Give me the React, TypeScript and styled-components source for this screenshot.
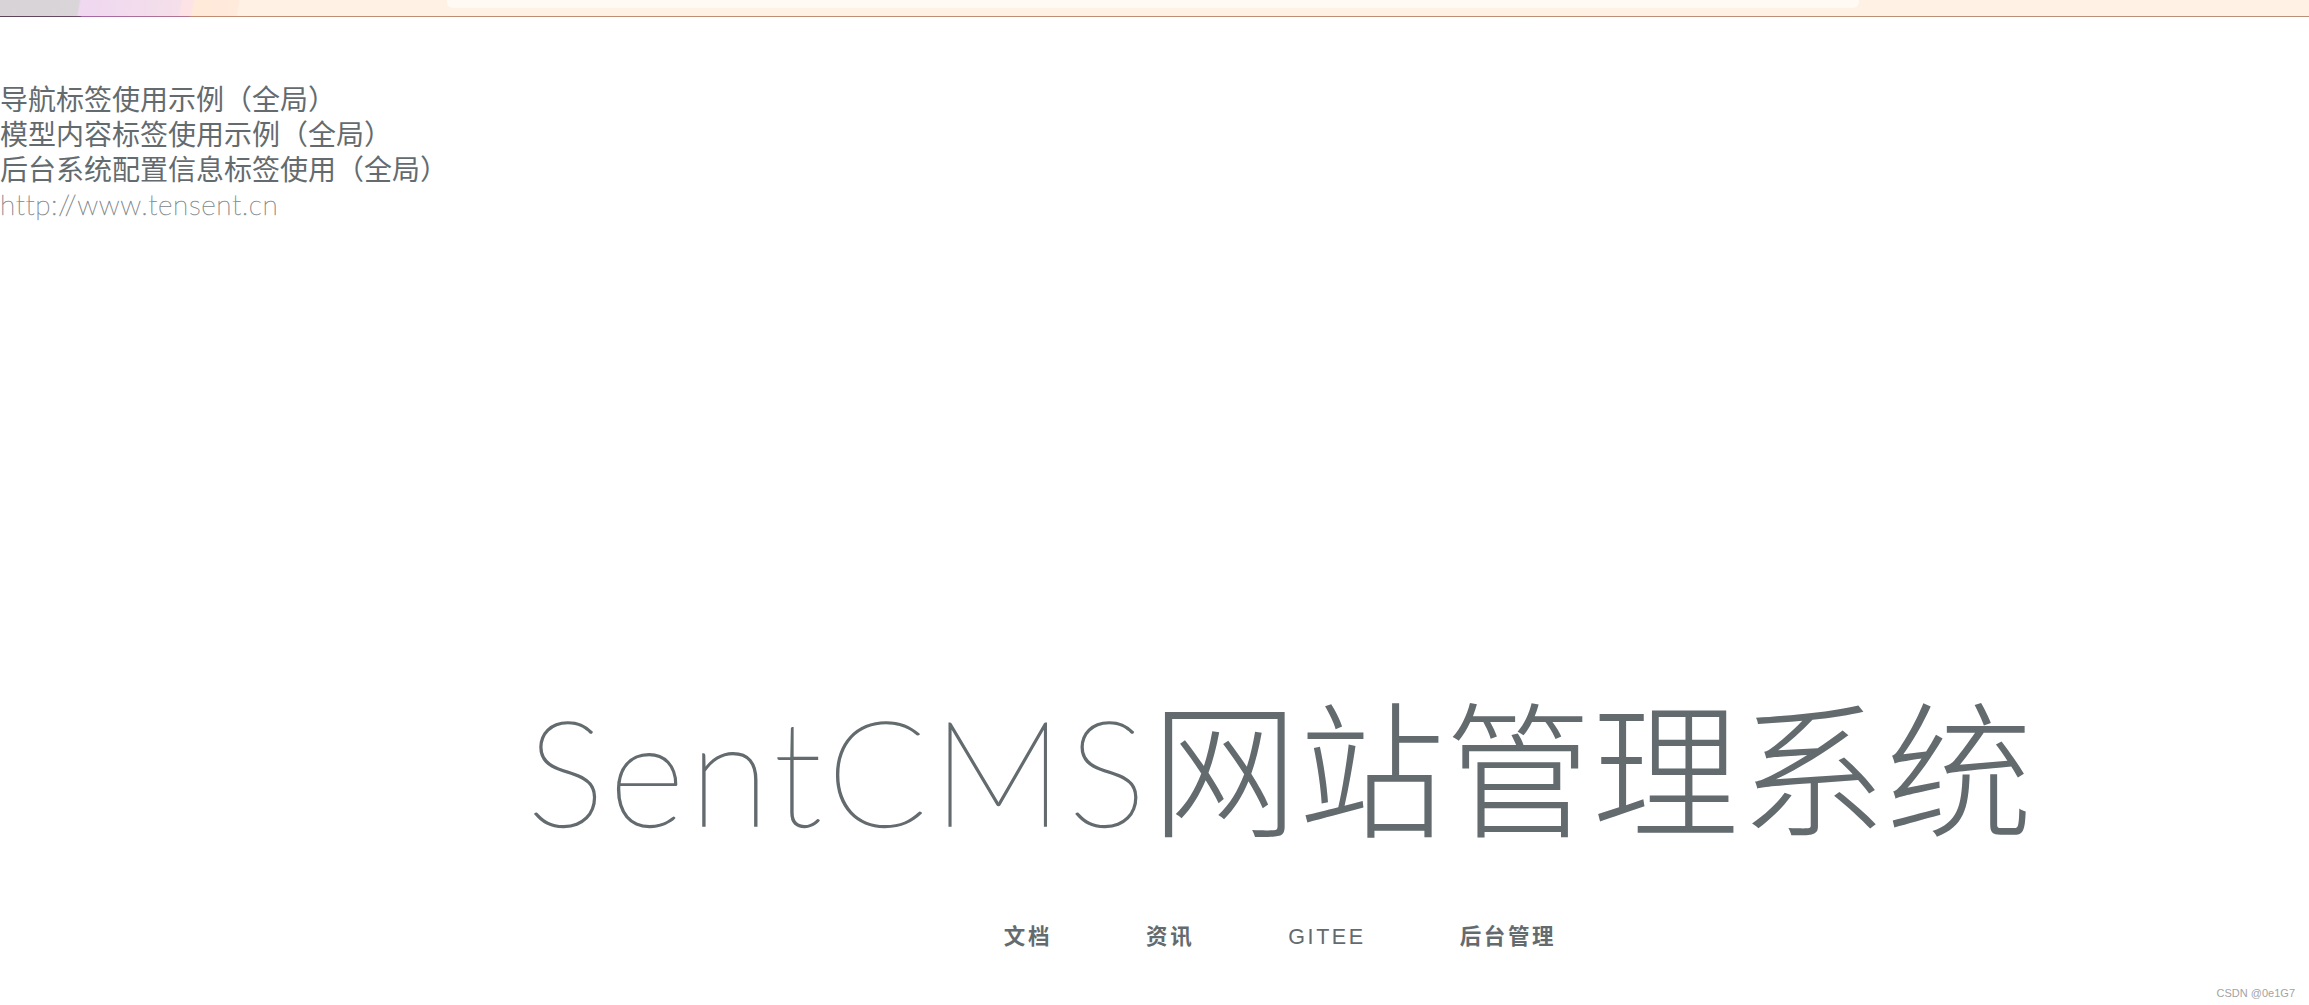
import React from "react";
import styled, { createGlobalStyle } from "styled-components";

const GlobalStyle = createGlobalStyle`
  html, body {
    margin: 0;
    padding: 0;
    background: #ffffff;
    overflow: hidden;
  }
  body {
    font-family: "Lato", "Noto Sans CJK SC", sans-serif;
    color: #636b6f;
  }
  a {
    text-decoration: none;
    color: inherit;
  }
`;

const nav = ["导航标签使用示例（全局）", "模型内容标签使用示例（全局）", "后台系统配置信息标签使用（全局）"];
const links = [
  { label: "文档", latin: false },
  { label: "资讯", latin: false },
  { label: "GITEE", latin: true },
  { label: "后台管理", latin: false },
];

export default function App() {
  return (
    <>
      <GlobalStyle />
      <Page>
        <TopStrip>
          <AddressBar />
        </TopStrip>
        <StripLine />

        <TagList>
          {nav.map((item) => (
            <TagLine key={item}>{item}</TagLine>
          ))}
          <UrlLine>http://www.tensent.cn</UrlLine>
        </TagList>

        <Hero>
          <Title>
            <TitleLatin>SentCMS</TitleLatin>
            <TitleCjk>网站管理系统</TitleCjk>
          </Title>
          <Links>
            {links.map((l) => (
              <LinkItem key={l.label} href="#" $latin={l.latin}>
                {l.label}
              </LinkItem>
            ))}
          </Links>
        </Hero>

        <Watermark>CSDN @0e1G7</Watermark>
      </Page>
    </>
  );
}

const Page = styled.div`
  position: relative;
  width: 2309px;
  height: 1005px;
  overflow: hidden;
`;

const TopStrip = styled.div`
  height: 16px;
  display: flex;
  align-items: flex-start;
  padding-left: 447px;
  box-sizing: border-box;
  background: linear-gradient(
    100deg,
    #d7d3d6 0px,
    #d9d5d8 78px,
    #efd8f1 80px,
    #f4dfea 178px,
    #fde3e5 180px,
    #fde3e5 190px,
    #ffe9d9 192px,
    #ffeadb 235px,
    #fff2e5 237px,
    #fff2e5 100%
  );
`;

const AddressBar = styled.div`
  width: 1412px;
  height: 8px;
  background: #fffaf4;
  border-radius: 0 0 6px 6px;
`;

const StripLine = styled.div`
  height: 1px;
  background: linear-gradient(
    90deg,
    #5b4357 0px,
    #6a4a66 80px,
    #a466a6 82px,
    #b07590 188px,
    #c08b72 192px,
    #b89078 100%
  );
`;

const TagList = styled.div`
  margin-top: 65px;
  display: flex;
  flex-direction: column;
`;

const TagLine = styled.a`
  display: block;
  font-size: 28px;
  line-height: 35px;
  font-weight: 400;
  color: #636b6f;
  white-space: nowrap;
`;

const UrlLine = styled.a`
  display: block;
  font-size: 28px;
  line-height: 35px;
  font-weight: 100;
  color: #858b8f;
  -webkit-text-stroke: 0.5px #858b8f;
  letter-spacing: 0.6px;
`;

const Hero = styled.div`
  width: 2560px;
  margin-top: 466px;
  display: flex;
  flex-direction: column;
  align-items: center;
`;

const Title = styled.div`
  font-size: 147px;
  line-height: 147px;
  white-space: nowrap;
  margin-bottom: 76px;
`;

const TitleLatin = styled.span`
  font-family: "Lato", sans-serif;
  font-weight: 100;
  -webkit-text-stroke: 1.6px #636b6f;
  letter-spacing: 5px;
`;

const TitleCjk = styled.span`
  font-family: "Noto Sans CJK SC", sans-serif;
  font-weight: 300;
`;

const Links = styled.div`
  display: flex;
  align-items: baseline;
`;

const LinkItem = styled.a<{ $latin: boolean }>`
  padding: 0 47px;
  font-family: ${(p) => (p.$latin ? '"Liberation Sans", sans-serif' : '"Noto Sans CJK SC", sans-serif')};
  font-size: 21.5px;
  font-weight: ${(p) => (p.$latin ? 400 : 700)};
  letter-spacing: 2.6px;
  text-transform: uppercase;
  color: #636b6f;
`;

const Watermark = styled.div`
  position: absolute;
  right: 14px;
  bottom: 6px;
  font-family: "Liberation Sans", sans-serif;
  font-size: 11px;
  color: #a3a3a3;
`;
